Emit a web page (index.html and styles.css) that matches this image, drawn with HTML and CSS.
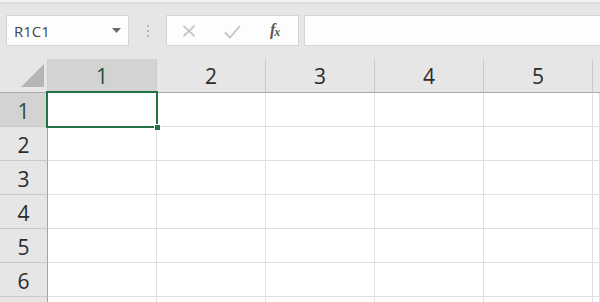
FILE: index.html
```html
<!DOCTYPE html>
<html>
<head>
<meta charset="utf-8">
<link rel="stylesheet" href="styles.css">
</head>
<body>
<div class="app">
  <div class="topbar"></div>
  <div class="toolbar">
    <div class="namebox">
      <span class="name">R1C1</span>
      <svg class="caret" width="9" height="5" viewBox="0 0 9 5"><polygon points="0,0 9,0 4.5,5" fill="#6b6b6b"/></svg>
    </div>
    <div class="grip"><i></i><i></i><i></i></div>
    <div class="fxbtns">
      <svg class="ico" width="14" height="12" viewBox="0 0 14 12"><path d="M1.5 0.8 L12.5 11.2 M12.5 0.8 L1.5 11.2" stroke="#c2c2c2" stroke-width="1.6" fill="none"/></svg>
      <svg class="ico" width="17" height="14" viewBox="0 0 17 14"><path d="M1 7.5 L6 12.5 L16 1" stroke="#c2c2c2" stroke-width="1.8" fill="none"/></svg>
      <span class="fx">f<span class="sub">x</span></span>
    </div>
    <div class="formula"></div>
  </div>
  <div class="sheet">
    <div class="corner"><svg width="47" height="33" viewBox="0 0 47 33"><polygon points="44,5 44,28 21,28" fill="#b5b5b5"/></svg></div>
    <div class="ch sel">1</div>
    <div class="ch">2</div>
    <div class="ch">3</div>
    <div class="ch">4</div>
    <div class="ch">5</div>
    <div class="ch last"></div>

    <div class="rh sel">1</div>
    <div class="c active"><div class="selbox"><div class="handle"></div></div></div>
    <div class="c"></div><div class="c"></div><div class="c"></div><div class="c"></div><div class="c"></div>

    <div class="rh">2</div>
    <div class="c"></div><div class="c"></div><div class="c"></div><div class="c"></div><div class="c"></div><div class="c"></div>

    <div class="rh">3</div>
    <div class="c"></div><div class="c"></div><div class="c"></div><div class="c"></div><div class="c"></div><div class="c"></div>

    <div class="rh">4</div>
    <div class="c"></div><div class="c"></div><div class="c"></div><div class="c"></div><div class="c"></div><div class="c"></div>

    <div class="rh">5</div>
    <div class="c"></div><div class="c"></div><div class="c"></div><div class="c"></div><div class="c"></div><div class="c"></div>

    <div class="rh">6</div>
    <div class="c"></div><div class="c"></div><div class="c"></div><div class="c"></div><div class="c"></div><div class="c"></div>

    <div class="rh"></div>
    <div class="c"></div><div class="c"></div><div class="c"></div><div class="c"></div><div class="c"></div><div class="c"></div>
  </div>
</div>
</body>
</html>
```

FILE: styles.css
```css
html, body {
  margin: 0;
  padding: 0;
  background: #e6e6e6;
  overflow: hidden;
}
.app {
  width: 600px;
  height: 302px;
  overflow: hidden;
  display: flex;
  flex-direction: column;
  font-family: "Open Sans", "Liberation Sans", sans-serif;
}
.app > * {
  flex-shrink: 0;
}
.topbar {
  height: 2px;
  background: #f4f3f1;
  border-bottom: 1px solid #dedede;
  box-shadow: 0 1px 2px rgba(0,0,0,0.06);
}
.toolbar {
  height: 56px;
  box-sizing: border-box;
  padding: 12px 0 0 6px;
  display: flex;
  align-items: flex-start;
}
.namebox {
  width: 123px;
  height: 31px;
  box-sizing: border-box;
  background: #fdfdfd;
  border: 1px solid #d5d5d5;
  display: flex;
  align-items: center;
  padding: 0 7px 0 7px;
}
.name {
  flex: 1;
  font-size: 15px;
  color: #444444;
  line-height: 1;
  margin-top: 1px;
}
.caret {
  display: block;
}
.grip {
  width: 37px;
  height: 31px;
  display: flex;
  flex-direction: column;
  align-items: center;
  justify-content: center;
  gap: 3px;
}
.grip i {
  display: block;
  width: 2px;
  height: 2px;
  background: #b5b5b5;
}
.fxbtns {
  width: 133px;
  height: 31px;
  box-sizing: border-box;
  background: #fdfdfd;
  border: 1px solid #d5d5d5;
  display: flex;
  align-items: center;
  padding-left: 15px;
}
.ico { display: block; }
.fxbtns .ico:nth-child(1) { margin-right: 28px; margin-top: 1px; }
.fxbtns .ico:nth-child(2) { margin-right: 29px; margin-top: 2px; }
.fx {
  font-family: "Liberation Serif", "DejaVu Serif", serif;
  font-style: italic;
  font-weight: bold;
  font-size: 16px;
  color: #5a5a5a;
  line-height: 1;
  margin-top: -2px;
}
.fx .sub {
  font-size: 12px;
  position: relative;
  top: 1px;
  margin-left: -1px;
}
.formula {
  margin-left: 5px;
  flex: 1;
  height: 31px;
  box-sizing: border-box;
  background: #fdfdfd;
  border: 1px solid #d5d5d5;
  border-right: none;
}
.sheet {
  display: grid;
  grid-template-columns: 48px repeat(5, 109px) 1fr;
  grid-auto-rows: 34px;
  background: #ffffff;
}
.sheet > div {
  box-sizing: border-box;
}
.corner {
  background: #e6e6e6;
  border-right: 1px solid #d0d0d0;
  border-bottom: 1px solid #a8a8a8;
}
.corner svg { display: block; }
.ch {
  background: #e6e6e6;
  border-right: 1px solid #cacaca;
  border-bottom: 1px solid #a8a8a8;
  display: flex;
  align-items: center;
  justify-content: center;
  font-size: 21px;
  color: #2c2c2c;
  padding-top: 1px;
}
.ch.sel {
  background: #d3d3d3;
  color: #27503a;
}
.ch.last { border-right: none; }
.rh {
  background: #e6e6e6;
  border-right: 1px solid #a3a3a3;
  border-bottom: 1px solid #c9c9c9;
  display: flex;
  align-items: center;
  justify-content: center;
  font-size: 21px;
  color: #2c2c2c;
  padding-top: 2px;
}
.rh.sel {
  background: #d3d3d3;
  color: #27503a;
}
.c {
  background: #ffffff;
  border-right: 1px solid #e0e0e0;
  border-bottom: 1px solid #e0e0e0;
}
.c.active {
  position: relative;
}
.selbox {
  position: absolute;
  left: -2px;
  top: -2px;
  right: -2px;
  bottom: -2px;
  border: 2px solid #217346;
  z-index: 2;
}
.handle {
  position: absolute;
  right: -5px;
  bottom: -5px;
  width: 7px;
  height: 7px;
  box-sizing: border-box;
  background: #217346;
  border: 1px solid #ffffff;
}
```
